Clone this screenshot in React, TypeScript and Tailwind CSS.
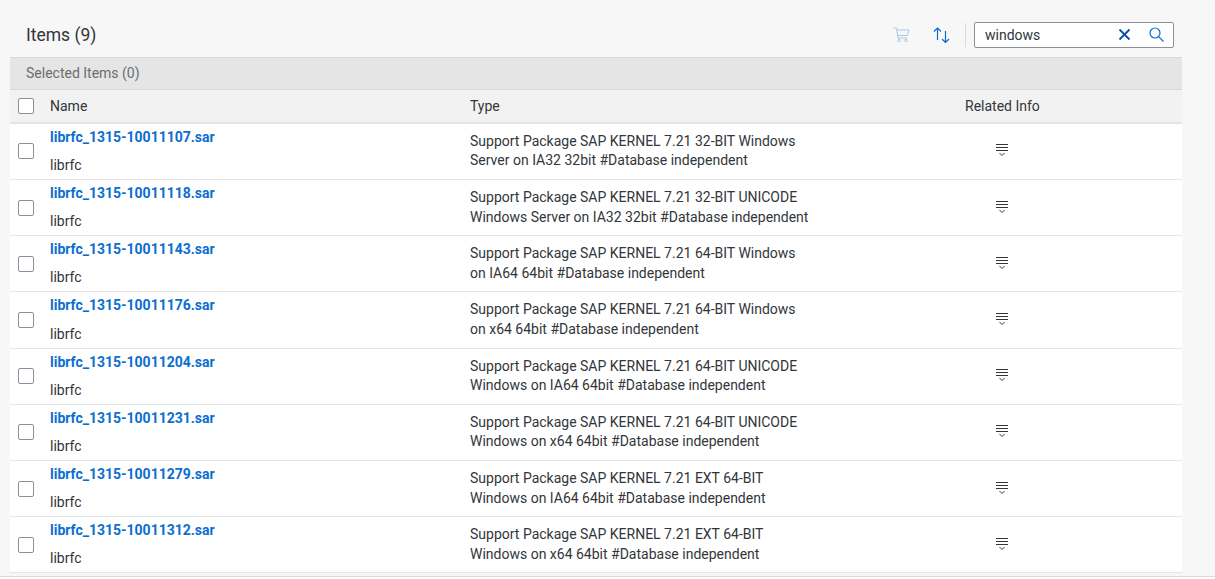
const rows = [
  { name: "librfc_1315-10011107.sar", l1: "Support Package SAP KERNEL 7.21 32-BIT Windows", l2: "Server on IA32 32bit #Database independent" },
  { name: "librfc_1315-10011118.sar", l1: "Support Package SAP KERNEL 7.21 32-BIT UNICODE", l2: "Windows Server on IA32 32bit #Database independent" },
  { name: "librfc_1315-10011143.sar", l1: "Support Package SAP KERNEL 7.21 64-BIT Windows", l2: "on IA64 64bit #Database independent" },
  { name: "librfc_1315-10011176.sar", l1: "Support Package SAP KERNEL 7.21 64-BIT Windows", l2: "on x64 64bit #Database independent" },
  { name: "librfc_1315-10011204.sar", l1: "Support Package SAP KERNEL 7.21 64-BIT UNICODE", l2: "Windows on IA64 64bit #Database independent" },
  { name: "librfc_1315-10011231.sar", l1: "Support Package SAP KERNEL 7.21 64-BIT UNICODE", l2: "Windows on x64 64bit #Database independent" },
  { name: "librfc_1315-10011279.sar", l1: "Support Package SAP KERNEL 7.21 EXT 64-BIT", l2: "Windows on IA64 64bit #Database independent" },
  { name: "librfc_1315-10011312.sar", l1: "Support Package SAP KERNEL 7.21 EXT 64-BIT", l2: "Windows on x64 64bit #Database independent" },
];

function Checkbox() {
  return <div className="w-4 h-4 border border-[#89919a] rounded-[2px] bg-white" />;
}

function ListIcon() {
  return (
    <svg width="14" height="14" viewBox="0 0 14 14" fill="none" stroke="#32363a" strokeWidth="1">
      <path d="M1 1.5H13M1 4.5H13M1 7.5H13" />
      <path d="M4.5 10L7 12.5L9.5 10" />
    </svg>
  );
}

export default function App() {
  return (
    <div className="h-[579px] overflow-hidden bg-[#f7f7f7] text-[14px] text-[#32363a] font-['Roboto',sans-serif]">
      <div className="h-[576px] overflow-hidden pl-[10px] pr-[33px]">
        {/* toolbar */}
        <div className="h-[57px] flex items-center pl-4 pr-2 pt-[12px]">
          <span className="text-[17.5px] pt-[2px]">Items (9)</span>
          <div className="ml-auto flex items-center">
            <svg className="mr-[23px]" width="17" height="16" viewBox="0 0 17 16" fill="none" stroke="#a9c9ea" strokeWidth="1">
              <path d="M0.5 1H3.5L5 11H14.5M4 3H16L14.5 8.5H4.8" />
              <circle cx="6" cy="13.5" r="1.2" />
              <circle cx="13" cy="13.5" r="1.2" />
            </svg>
            <svg className="mr-[15px]" width="17" height="16" viewBox="0 0 17 16" fill="none" stroke="#0a6ed1" strokeWidth="1.2">
              <path d="M4.5 13V1M1 4.5L4.5 1L8 4.5" />
              <path d="M12.5 4V15.5M9 12L12.5 15.5L16 12" />
            </svg>
            <div className="w-px h-6 bg-[#d9d9d9] mr-2" />
            <div className="w-[200px] h-[26px] bg-white border border-[#89919a] rounded-[2px] flex items-center pl-[10px] pr-[9px]">
              <span className="pt-px">windows</span>
              <svg className="ml-auto mr-[18px]" width="13" height="13" viewBox="0 0 13 13" fill="none" stroke="#0a4f9e" strokeWidth="1.8">
                <path d="M1.5 1.5L11.5 11.5M11.5 1.5L1.5 11.5" />
              </svg>
              <svg width="15" height="15" viewBox="0 0 15 15" fill="none" stroke="#0a6ed1" strokeWidth="1.2">
                <circle cx="6" cy="6" r="5" />
                <path d="M9.8 9.8L14.5 14.5" />
              </svg>
            </div>
          </div>
        </div>

        {/* selected bar */}
        <div className="h-[33px] bg-[#e5e5e5] border-y border-[#d9d9d9] flex items-center pl-4 text-[#6a6d70]">
          Selected Items (0)
        </div>

        {/* header */}
        <div className="h-[33.8px] bg-[#f2f2f2] border-b-2 border-[#e5e5e5] flex items-center">
          <div className="w-10 pl-2"><Checkbox /></div>
          <div className="w-[420px] pt-px">Name</div>
          <div className="w-[495px] pt-px">Type</div>
          <div className="pt-px">Related Info</div>
        </div>

        {/* rows */}
        {rows.map((r) => (
          <div key={r.name} className="h-[56.2px] bg-white border-b border-[#e5e5e5] flex items-center">
            <div className="w-10 pl-2"><Checkbox /></div>
            <div className="w-[420px] h-full flex flex-col justify-between pt-[3px] pb-[3px]">
              <span className="font-bold text-[#0a6ed1]">{r.name}</span>
              <span>librfc</span>
            </div>
            <div className="w-[495px] leading-[19.5px]">
              <div>{r.l1}</div>
              <div>{r.l2}</div>
            </div>
            <div className="pl-[30px] pb-[2px]"><ListIcon /></div>
          </div>
        ))}
      </div>
      <div className="h-[3px] bg-white border-t border-[#d9d9d9]" />
    </div>
  );
}
